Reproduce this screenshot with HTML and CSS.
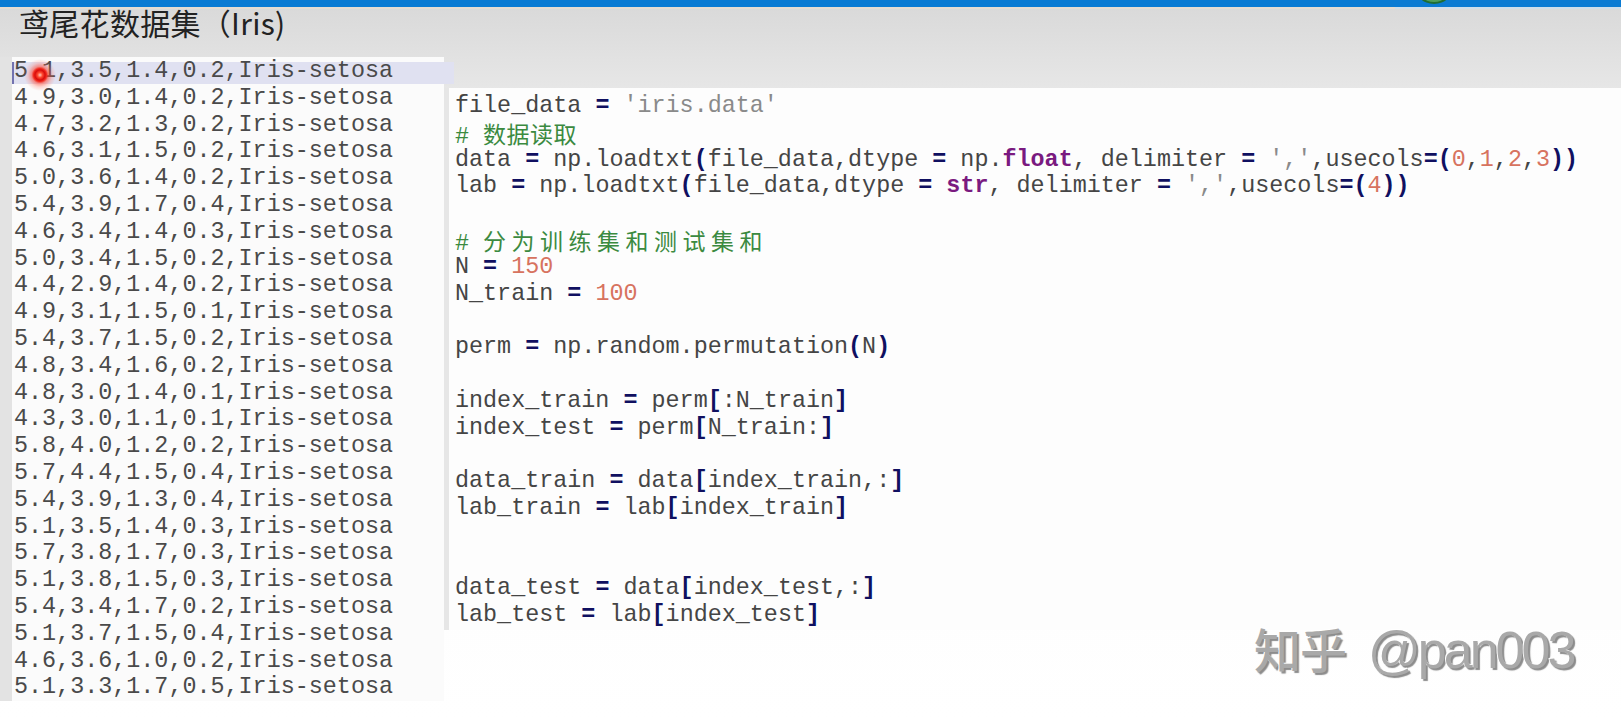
FILE: index.html
```html
<!DOCTYPE html>
<html lang="zh-CN">
<head>
<meta charset="utf-8">
<title>鸢尾花数据集（Iris)</title>
<link rel="stylesheet" href="styles.css">
</head>
<body>
<div class="topbar"><div class="topline"></div></div>
<div class="badge"></div>
<h1 class="title">鸢尾花数据集（Iris)</h1>
<main class="main">
  <section class="data">
    <div class="row current">5.1,3.5,1.4,0.2,Iris-setosa</div>
    <div class="row">4.9,3.0,1.4,0.2,Iris-setosa</div>
    <div class="row">4.7,3.2,1.3,0.2,Iris-setosa</div>
    <div class="row">4.6,3.1,1.5,0.2,Iris-setosa</div>
    <div class="row">5.0,3.6,1.4,0.2,Iris-setosa</div>
    <div class="row">5.4,3.9,1.7,0.4,Iris-setosa</div>
    <div class="row">4.6,3.4,1.4,0.3,Iris-setosa</div>
    <div class="row">5.0,3.4,1.5,0.2,Iris-setosa</div>
    <div class="row">4.4,2.9,1.4,0.2,Iris-setosa</div>
    <div class="row">4.9,3.1,1.5,0.1,Iris-setosa</div>
    <div class="row">5.4,3.7,1.5,0.2,Iris-setosa</div>
    <div class="row">4.8,3.4,1.6,0.2,Iris-setosa</div>
    <div class="row">4.8,3.0,1.4,0.1,Iris-setosa</div>
    <div class="row">4.3,3.0,1.1,0.1,Iris-setosa</div>
    <div class="row">5.8,4.0,1.2,0.2,Iris-setosa</div>
    <div class="row">5.7,4.4,1.5,0.4,Iris-setosa</div>
    <div class="row">5.4,3.9,1.3,0.4,Iris-setosa</div>
    <div class="row">5.1,3.5,1.4,0.3,Iris-setosa</div>
    <div class="row">5.7,3.8,1.7,0.3,Iris-setosa</div>
    <div class="row">5.1,3.8,1.5,0.3,Iris-setosa</div>
    <div class="row">5.4,3.4,1.7,0.2,Iris-setosa</div>
    <div class="row">5.1,3.7,1.5,0.4,Iris-setosa</div>
    <div class="row">4.6,3.6,1.0,0.2,Iris-setosa</div>
    <div class="row">5.1,3.3,1.7,0.5,Iris-setosa</div>
    <div class="pointer"></div>
  </section>
  <section class="code">
    <div class="line">file_data <b class="op">=</b> <span class="str">'iris.data'</span></div>
    <div class="line cm"># <span class="cjk">数据读取</span></div>
    <div class="line">data <b class="op">=</b> np.loadtxt<b class="op">(</b>file_data,dtype <b class="op">=</b> np.<b class="kw">float</b>, delimiter <b class="op">=</b> <span class="str">','</span>,usecols<b class="op">=(</b><span class="num">0</span>,<span class="num">1</span>,<span class="num">2</span>,<span class="num">3</span><b class="op">))</b></div>
    <div class="line">lab <b class="op">=</b> np.loadtxt<b class="op">(</b>file_data,dtype <b class="op">=</b> <b class="kw">str</b>, delimiter <b class="op">=</b> <span class="str">','</span>,usecols<b class="op">=(</b><span class="num">4</span><b class="op">))</b></div>
    <div class="line"></div>
    <div class="line cm"># <span class="cjk wide">分为训练集和测试集和</span></div>
    <div class="line">N <b class="op">=</b> <span class="num">150</span></div>
    <div class="line">N_train <b class="op">=</b> <span class="num">100</span></div>
    <div class="line"></div>
    <div class="line">perm <b class="op">=</b> np.random.permutation<b class="op">(</b>N<b class="op">)</b></div>
    <div class="line"></div>
    <div class="line">index_train <b class="op">=</b> perm<b class="op">[</b>:N_train<b class="op">]</b></div>
    <div class="line">index_test <b class="op">=</b> perm<b class="op">[</b>N_train:<b class="op">]</b></div>
    <div class="line"></div>
    <div class="line">data_train <b class="op">=</b> data<b class="op">[</b>index_train,:<b class="op">]</b></div>
    <div class="line">lab_train <b class="op">=</b> lab<b class="op">[</b>index_train<b class="op">]</b></div>
    <div class="line"></div>
    <div class="line"></div>
    <div class="line">data_test <b class="op">=</b> data<b class="op">[</b>index_test,:<b class="op">]</b></div>
    <div class="line">lab_test <b class="op">=</b> lab<b class="op">[</b>index_test<b class="op">]</b></div>
  </section>
</main>
<div class="watermark"><span class="wm-cjk">知乎</span><span class="wm-at">@pan003</span></div>
</body>
</html>
```

FILE: styles.css
```css
html, body {
  margin: 0;
  padding: 0;
}
body {
  width: 1621px;
  height: 721px;
  overflow: hidden;
  position: relative;
  background: linear-gradient(to bottom, #d8d8d8 0px, #e2e2e2 60px, #f2f2f2 160px, #fbfbfb 300px, #ffffff 100%);
  font-family: "Liberation Mono", monospace;
}
.topbar {
  height: 7px;
  background: #0a7bd3;
  position: relative;
}
.topline {
  position: absolute;
  left: 0;
  right: 0;
  top: 7px;
  height: 2px;
  background: linear-gradient(to right, #e6ddd2 0, #e6ddd2 1395px, #cfdeea 1395px, #cfdeea 100%);
}
.badge {
  position: absolute;
  left: 1414px;
  top: -34px;
  width: 36px;
  height: 34px;
  border-radius: 50%;
  border: 2px solid #1f6e34;
  background: #4f9e5a;
}
.title {
  margin: 0 0 20px 0;
  padding-left: 19px;
  height: 30px;
  line-height: 30px;
  font-family: "Noto Sans CJK SC", "Noto Sans", sans-serif;
  font-weight: 400;
  font-size: 30px;
  color: #222;
  letter-spacing: 0.3px;
}
.main {
  display: flex;
  align-items: flex-start;
}
.data {
  position: relative;
  width: 431px;
  border-left: 12px solid #e3e3e3;
  background: #fbfbfb;
  font-size: 23.4px;
  line-height: 26.8px;
  color: #4a4a4a;
  padding-left: 1px;
  padding-top: 1px;
}
.row {
  white-space: pre;
  padding-left: 1px;
}
.row.current {
  margin-right: -10px;
  margin-left: -1px;
  padding-left: 2px;
  background: linear-gradient(to bottom, transparent 0, transparent 4px, #e0e1f1 4px, #e0e1f1 26px, transparent 26px);
  position: relative;
}
.row.current::before {
  content: "";
  position: absolute;
  left: 0;
  top: 4px;
  width: 2px;
  height: 22px;
  background: #7272b0;
}
.pointer {
  position: absolute;
  left: 12px;
  top: 2px;
  width: 32px;
  height: 32px;
  border-radius: 50%;
  background: radial-gradient(circle, #ffc8b8 0, #ff4a30 2.5px, #d80c0c 5px, #f0281c 6.5px, rgba(255, 70, 50, 0.55) 8.5px, rgba(255, 110, 90, 0.25) 12px, rgba(255, 150, 130, 0) 16px);
}
.code {
  flex: 1;
  margin-top: 31px;
  border-left: 5px solid #e6e6e6;
  padding: 5px 0 1px 6px;
  font-size: 23.4px;
  line-height: 26.8px;
  color: #454545;
  background: #fdfdfd;
}
.line {
  white-space: pre;
  height: 26.8px;
}
.op {
  color: #101060;
  font-weight: 700;
}
.kw {
  color: #7a1a80;
  font-weight: 700;
}
.num {
  color: #d7735f;
}
.str {
  color: #8a8a8a;
}
.cm {
  color: #3b8a40;
}
.cjk {
  font-family: "Noto Sans CJK SC", sans-serif;
  font-size: 23px;
  letter-spacing: 0.5px;
}
.cjk.wide {
  letter-spacing: 5.5px;
}
.watermark {
  position: absolute;
  left: 1254px;
  top: 622px;
  line-height: 52px;
  font-size: 52px;
  color: #a9a9a9;
  white-space: nowrap;
  text-shadow: -1px -1px 0 #ffffff, 2px 2px 1px #8c8c8c;
}
.wm-cjk {
  font-family: "Noto Sans CJK SC", sans-serif;
  font-size: 47px;
  font-weight: 500;
  letter-spacing: -1px;
  margin-right: 22px;
}
.wm-at {
  font-family: "Liberation Sans", sans-serif;
  letter-spacing: -3px;
}
```
